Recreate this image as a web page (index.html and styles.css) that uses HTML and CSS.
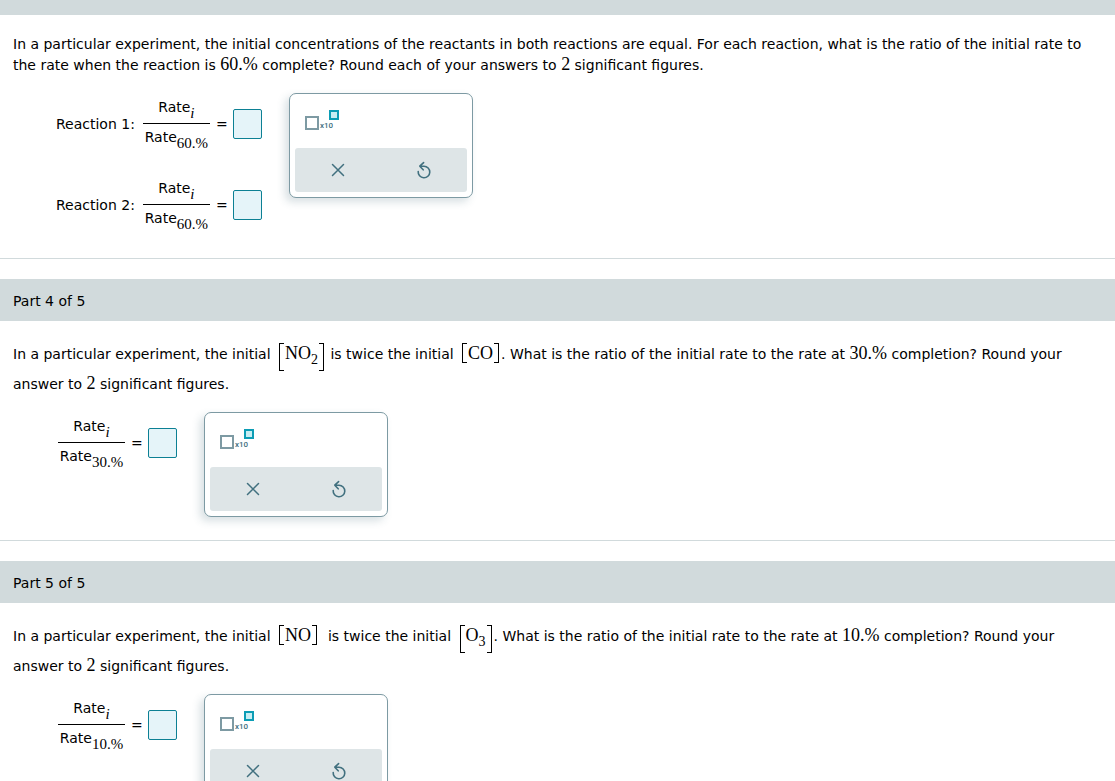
FILE: index.html
```
<!DOCTYPE html>
<html lang="en">
    <head>
        <meta charset="utf-8">
        <title>Reaction rates</title>
        <link rel="stylesheet" href="styles.css">
    </head>
    <body>
        <!-- icons shared by the three keypads -->
        <svg class="icon-defs" aria-hidden="true">
            <symbol id="icon-sci" viewBox="0 0 36 22">
                <rect x="2" y="7" width="12" height="12" fill="#fff" stroke="#7d9aa3" stroke-width="2"/>
                <text x="16" y="18" class="sci-text">x10</text>
                <rect x="26" y="1" width="8" height="8" fill="#c8eef3" stroke="#0c9db5" stroke-width="2"/>
            </symbol>
            <symbol id="icon-clear" viewBox="0 0 16 16">
                <path d="M2.5 2.5 L13.5 13.5 M13.5 2.5 L2.5 13.5" fill="none" stroke="#41707f" stroke-width="1.5" stroke-linecap="round"/>
            </symbol>
            <symbol id="icon-undo" viewBox="0 0 16 18">
                <path d="M2.2 10.5 A5.8 5.8 0 1 0 8 5.2 L3.8 5.2 M7.6 1.6 L3.8 5.2 L7.2 8.8" fill="none" stroke="#41707f" stroke-width="1.6" stroke-linecap="round" stroke-linejoin="round"/>
            </symbol>
        </svg>

        <div class="part-bar top-bar"></div>
        <section class="part first">
            <p class="question">In a particular experiment, the initial concentrations of the reactants in both reactions are equal. For each reaction, what is the ratio of the initial rate to the rate when the reaction is <span class="num">60.%</span> complete? Round each of your answers to <span class="num">2</span> significant figures.</p>
            <div class="work">
                <div class="answers">
                    <div class="equation">
                        <label for="reaction1">Reaction 1:</label>
                        <div class="fraction">
                            <div class="top">Rate<span class="sub"><i>i</i></span></div>
                            <div class="bottom">Rate<span class="sub">60.%</span></div>
                        </div>
                        <span class="equals">=</span>
                        <input id="reaction1" class="answer" type="text">
                    </div>
                    <div class="equation">
                        <label for="reaction2">Reaction 2:</label>
                        <div class="fraction">
                            <div class="top">Rate<span class="sub"><i>i</i></span></div>
                            <div class="bottom">Rate<span class="sub">60.%</span></div>
                        </div>
                        <span class="equals">=</span>
                        <input id="reaction2" class="answer" type="text">
                    </div>
                </div>
                <div class="keypad">
                    <button class="sci" type="button" aria-label="Scientific notation"><svg width="36" height="22"><use href="#icon-sci"/></svg></button>
                    <div class="actions">
                        <button type="button" aria-label="Clear"><svg width="16" height="16"><use href="#icon-clear"/></svg></button>
                        <button type="button" aria-label="Undo"><svg width="16" height="18"><use href="#icon-undo"/></svg></button>
                    </div>
                </div>
            </div>
        </section>

        <h2 class="part-bar">Part 4 of 5</h2>
        <section class="part">
            <p class="question tall">In a particular experiment, the initial <span class="conc deep">NO<span class="sub">2</span></span> is twice the initial <span class="conc">CO</span>. What is the ratio of the initial rate to the rate at <span class="num">30.%</span> completion? Round your answer to <span class="num">2</span> significant figures.</p>
            <div class="work">
                <div class="answers">
                    <div class="equation">
                        <div class="fraction">
                            <div class="top">Rate<span class="sub"><i>i</i></span></div>
                            <div class="bottom">Rate<span class="sub">30.%</span></div>
                        </div>
                        <label class="equals" for="ratio4">=</label>
                        <input id="ratio4" class="answer" type="text">
                    </div>
                </div>
                <div class="keypad">
                    <button class="sci" type="button" aria-label="Scientific notation"><svg width="36" height="22"><use href="#icon-sci"/></svg></button>
                    <div class="actions">
                        <button type="button" aria-label="Clear"><svg width="16" height="16"><use href="#icon-clear"/></svg></button>
                        <button type="button" aria-label="Undo"><svg width="16" height="18"><use href="#icon-undo"/></svg></button>
                    </div>
                </div>
            </div>
        </section>

        <h2 class="part-bar">Part 5 of 5</h2>
        <section class="part">
            <p class="question tall">In a particular experiment, the initial <span class="conc">NO</span>&nbsp; is twice the initial <span class="conc deep">O<span class="sub">3</span></span>. What is the ratio of the initial rate to the rate at <span class="num">10.%</span> completion? Round your answer to <span class="num">2</span> significant figures.</p>
            <div class="work">
                <div class="answers">
                    <div class="equation">
                        <div class="fraction">
                            <div class="top">Rate<span class="sub"><i>i</i></span></div>
                            <div class="bottom">Rate<span class="sub">10.%</span></div>
                        </div>
                        <label class="equals" for="ratio5">=</label>
                        <input id="ratio5" class="answer" type="text">
                    </div>
                </div>
                <div class="keypad">
                    <button class="sci" type="button" aria-label="Scientific notation"><svg width="36" height="22"><use href="#icon-sci"/></svg></button>
                    <div class="actions">
                        <button type="button" aria-label="Clear"><svg width="16" height="16"><use href="#icon-clear"/></svg></button>
                        <button type="button" aria-label="Undo"><svg width="16" height="18"><use href="#icon-undo"/></svg></button>
                    </div>
                </div>
            </div>
        </section>
    </body>
</html>
```
FILE: styles.css
```
*{
    box-sizing: border-box;
}
html{
    scrollbar-width: none;
}
body{
    margin: 0;
    font-family: Verdana, "DejaVu Sans", sans-serif;
    font-size: 14px;
    line-height: 21px;
    color: #000;
    background: #fff;
}
.icon-defs{
    display: none;
}
.sci-text{
    font: 500 8px Roboto, sans-serif;
    fill: #41707f;
}

/* grey title bars */
.part-bar{
    margin: 20px 0 0;
    padding: 12px 13px 9px;
    font-size: 14px;
    font-weight: normal;
    background: #d1dadc;
}
.top-bar{
    height: 15px;
    margin: 0;
    padding: 0;
}
.part{
    padding: 18px 24px 23px 13px;
    border-bottom: 1px solid #d1dadc;
}
.part.first{
    padding-top: 19px;
    padding-bottom: 22px;
}
.question{
    margin: 0 0 17px;
}
.question.tall{
    line-height: 30px;
    margin-bottom: 13px;
}
.num{
    font-family: "Liberation Serif", serif;
    font-size: 18px;
    line-height: 1;
}

/* square brackets round a concentration */
.conc{
    display: inline-block;
    margin: 0 2px 0 4px;
    padding: 0 5px;
    font-family: "Liberation Serif", serif;
    font-size: 18px;
    line-height: 20px;
    background:
        linear-gradient(#000, #000) 0 0 / 4px 1px,
        linear-gradient(#000, #000) 0 100% / 4px 1px,
        linear-gradient(#000, #000) 100% 0 / 4px 1px,
        linear-gradient(#000, #000) 100% 100% / 4px 1px;
    background-repeat: no-repeat;
    border: solid #000;
    border-width: 0 1px;
}
.conc.deep{
    padding-bottom: 4px;
    margin-bottom: -6px;
}
.conc .sub{
    font-size: 14px;
    line-height: 1;
    vertical-align: -5px;
}

.work{
    display: flex;
    align-items: flex-start;
    gap: 27px;
    padding-left: 43px;
}
.answers{
    display: flex;
    flex-direction: column;
    gap: 19px;
}
.equation{
    display: flex;
    align-items: center;
    height: 62px;
}
.fraction{
    width: 67px;
    margin: 0 6px 0 2px;
    text-align: center;
    white-space: nowrap;
}
label + .fraction{
    margin-left: 8px;
}
.top, .bottom{
    height: 30px;
    line-height: 26px;
}
.top{
    border-bottom: 1px solid #000;
}
.fraction .sub{
    font-family: "Liberation Serif", serif;
    font-size: 15px;
    line-height: 1;
    vertical-align: -6px;
}
.equals{
    margin-right: 5px;
}
.answer{
    width: 29px;
    height: 30px;
    padding: 0 4px;
    border: 1px solid #0c8094;
    border-radius: 2px;
    background: #e5f4f9;
    font: inherit;
}

.keypad{
    width: 184px;
    padding: 5px;
    border: 1px solid #7d9aa3;
    border-radius: 7px;
    background: #fff;
    box-shadow: -4px 4px 8px rgba(60, 100, 115, 0.2);
}
.keypad button{
    display: flex;
    align-items: center;
    justify-content: center;
    padding: 0;
    border: none;
    background: none;
    cursor: pointer;
}
.keypad .sci{
    margin: 11px 0 16px 9px;
}
.actions{
    display: grid;
    grid-template-columns: 1fr 1fr;
    height: 44px;
    border-radius: 3px;
    background: #dee5e7;
}
```
